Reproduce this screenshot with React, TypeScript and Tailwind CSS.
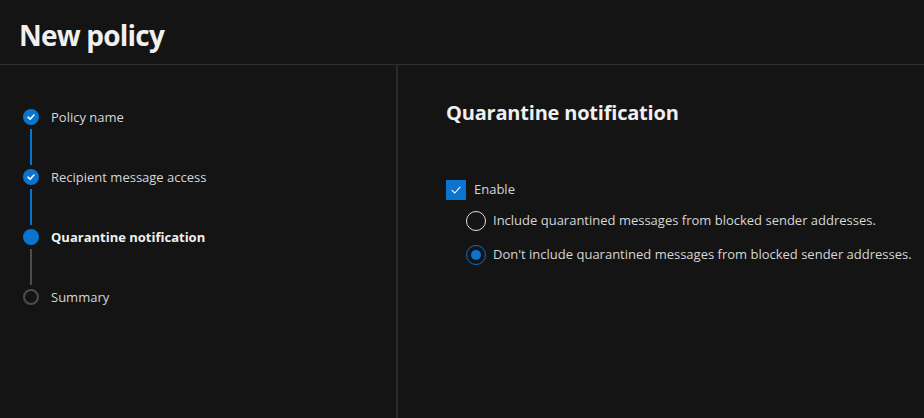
import React from "react";

const steps = [
  { label: "Policy name", state: "done" },
  { label: "Recipient message access", state: "done" },
  { label: "Quarantine notification", state: "current" },
  { label: "Summary", state: "todo" },
];

function StepCircle({ state }: { state: string }) {
  if (state === "done") {
    return (
      <div className="w-4 h-4 rounded-full bg-[#0a74cf] flex items-center justify-center">
        <svg width="10" height="10" viewBox="0 0 10 10" fill="none">
          <path d="M2 5.2 L4.1 7.2 L8 3" stroke="white" strokeWidth="1.6" strokeLinecap="round" strokeLinejoin="round" />
        </svg>
      </div>
    );
  }
  if (state === "current") {
    return <div className="w-4 h-4 rounded-full bg-[#0a74cf]" />;
  }
  return <div className="w-4 h-4 rounded-full border-2 border-[#4d4d4d]" />;
}

export default function App() {
  return (
    <div
      className="w-[924px] h-[418px] bg-[#141414] text-[#d6d6d6] flex flex-col overflow-hidden"
      style={{ fontFamily: '"Open Sans", "Noto Sans", sans-serif' }}
    >
      <div className="h-[65px] border-b border-[#2e2e2e] flex items-center pl-[19px] shrink-0">
        <h1 className="text-[28px] font-bold text-[#f0f0f0] leading-none pt-[6px] tracking-[-0.8px]">New policy</h1>
      </div>
      <div className="flex flex-1">
        <div className="w-[398px] border-r-2 border-[#2a2a2a] pl-[23px] pt-[44px] shrink-0">
          {steps.map((s, i) => (
            <div key={s.label} className="flex gap-3">
              <div className="flex flex-col items-center w-4">
                <StepCircle state={s.state} />
                {i < steps.length - 1 && (
                  <div
                    className={
                      "w-[2px] h-[36px] my-1 " +
                      (s.state === "done" ? "bg-[#0a74cf]" : "bg-[#4d4d4d]")
                    }
                  />
                )}
              </div>
              <span
                className={
                  "text-[13px] leading-4 " +
                  (s.state === "current" ? "font-bold text-[#f0f0f0]" : "text-[#d6d6d6]")
                }
              >
                {s.label}
              </span>
            </div>
          ))}
        </div>
        <div className="flex-1 pl-[48px] pt-[34px]">
          <h2 className="text-xl font-bold text-[#f0f0f0] leading-7 tracking-[-0.2px]">Quarantine notification</h2>
          <div className="mt-[53px] flex items-center gap-2 h-5">
            <div className="w-5 h-5 bg-[#0a74cf] flex items-center justify-center">
              <svg width="12" height="12" viewBox="0 0 12 12" fill="none">
                <path d="M2 6.3 L4.8 9 L10 3.2" stroke="white" strokeWidth="1.1" strokeLinecap="round" strokeLinejoin="round" />
              </svg>
            </div>
            <span className="text-[13px]">Enable</span>
          </div>
          <div className="pl-5 mt-[11px] flex flex-col gap-[14px]">
            <div className="flex items-center gap-[7px] h-5">
              <div className="w-5 h-5 rounded-full border border-[#e0e0e0]" />
              <span className="text-[13px]">Include quarantined messages from blocked sender addresses.</span>
            </div>
            <div className="flex items-center gap-[7px] h-5">
              <div className="w-5 h-5 rounded-full border border-[#0a74cf] flex items-center justify-center">
                <div className="w-[10px] h-[10px] rounded-full bg-[#0a74cf]" />
              </div>
              <span className="text-[13px] whitespace-nowrap">Don't include quarantined messages from blocked sender addresses.</span>
            </div>
          </div>
        </div>
      </div>
    </div>
  );
}
